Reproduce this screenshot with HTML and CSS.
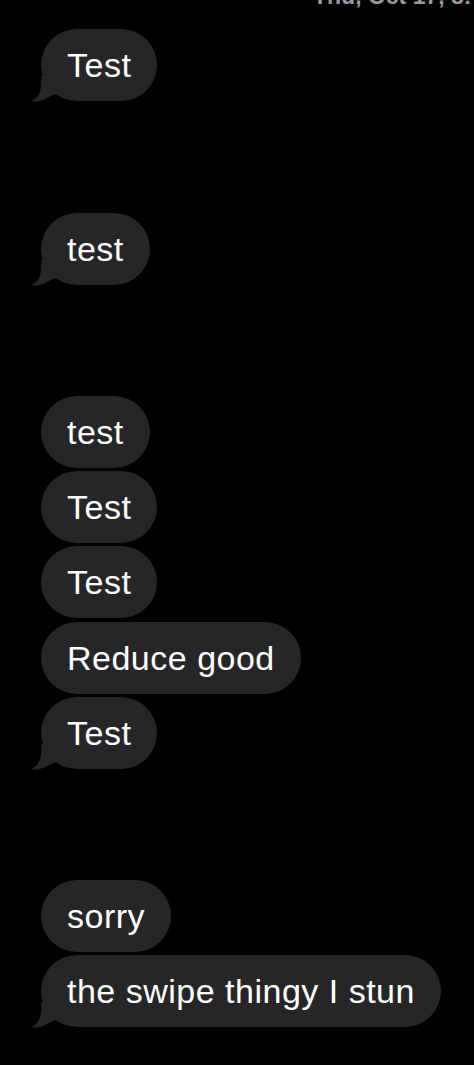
FILE: index.html
```html
<!DOCTYPE html>
<html lang="en">
<head>
<meta charset="utf-8">
<title>Messages</title>
<link rel="stylesheet" href="styles.css">
</head>
<body>
<div class="screen">
  <div class="stamp">Thu, Oct 17, 8:</div>
  <div class="thread">
    <div class="group">
      <div class="bubble">Test<svg class="tail" viewBox="0 0 28 26" width="28" height="26"><path d="M11.5 0 L11 9 C11 17 7 23 0 25.5 C6 26 12 25 17 22 C20 20.3 23.5 18.8 28 17.5 L28 0 Z"/></svg></div>
    </div>
    <div class="group">
      <div class="bubble">test<svg class="tail" viewBox="0 0 28 26" width="28" height="26"><path d="M11.5 0 L11 9 C11 17 7 23 0 25.5 C6 26 12 25 17 22 C20 20.3 23.5 18.8 28 17.5 L28 0 Z"/></svg></div>
    </div>
    <div class="group">
      <div class="bubble">test</div>
      <div class="bubble">Test</div>
      <div class="bubble">Test</div>
      <div class="bubble">Reduce good</div>
      <div class="bubble">Test<svg class="tail" viewBox="0 0 28 26" width="28" height="26"><path d="M11.5 0 L11 9 C11 17 7 23 0 25.5 C6 26 12 25 17 22 C20 20.3 23.5 18.8 28 17.5 L28 0 Z"/></svg></div>
    </div>
    <div class="group">
      <div class="bubble">sorry</div>
      <div class="bubble">the swipe thingy I stun<svg class="tail" viewBox="0 0 28 26" width="28" height="26"><path d="M11.5 0 L11 9 C11 17 7 23 0 25.5 C6 26 12 25 17 22 C20 20.3 23.5 18.8 28 17.5 L28 0 Z"/></svg></div>
    </div>
  </div>
</div>
</body>
</html>
```

FILE: styles.css
```css
html, body {
  margin: 0;
  padding: 0;
  background: #000;
}

.screen {
  width: 474px;
  height: 1065px;
  overflow: hidden;
  background: #000;
  font-family: "Liberation Sans", Arial, sans-serif;
}

.stamp {
  margin-top: -15px;
  height: 23px;
  line-height: 23px;
  font-size: 23px;
  font-weight: bold;
  color: #9a9a9f;
  padding-left: 313px;
  white-space: nowrap;
  overflow: hidden;
}

.thread {
  padding: 21px 0 0 41px;
  display: flex;
  flex-direction: column;
  gap: 111.5px;
}

.group {
  display: flex;
  flex-direction: column;
  align-items: flex-start;
  gap: 3.2px;
}

.bubble {
  position: relative;
  background: #262629;
  color: #ffffff;
  font-size: 34px;
  line-height: 40px;
  letter-spacing: 0.5px;
  padding: 16px 26px;
  border-radius: 36px;
  white-space: nowrap;
}

.tail {
  position: absolute;
  left: -11px;
  bottom: -1px;
  fill: #262629;
}
```
